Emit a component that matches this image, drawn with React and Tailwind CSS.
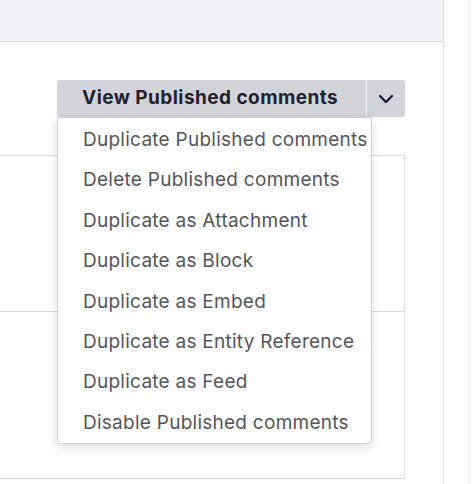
import { ChevronDown } from 'lucide-react';

const ITEMS = [
  'Duplicate Published comments',
  'Delete Published comments',
  'Duplicate as Attachment',
  'Duplicate as Block',
  'Duplicate as Embed',
  'Duplicate as Entity Reference',
  'Duplicate as Feed',
  'Disable Published comments',
];

export default function App() {
  return (
    <div
      className="relative w-[474px] h-[484px] overflow-hidden bg-white flex"
      style={{ fontFamily: 'Inter, "Noto Sans", sans-serif' }}
    >
      {/* main column */}
      <div className="w-[444px] h-full border-r border-[#dcdce0] flex flex-col">
        <div className="h-[42px] bg-[#f3f3f8] border-b border-[#dcdce0]" />

        {/* action bar */}
        <div className="pt-[38px] pl-[57px] h-[113px]">
          <div className="flex h-[37px] w-[348px] rounded-[3px] overflow-hidden">
            <div className="w-[309px] bg-[#d3d4d9] flex items-center pl-[25px] text-[19px] font-bold text-[#222330] tracking-[0.45px]">
              View Published comments
            </div>
            <div className="w-px bg-[#f4f4f6]" />
            <div className="flex-1 bg-[#d3d4d9] flex items-center justify-center">
              <ChevronDown size={24} strokeWidth={2.2} className="text-[#14183a]" />
            </div>
          </div>
        </div>

        {/* panel behind the menu */}
        <div className="w-[405px] border-r border-t border-b border-[#dcdce0] flex flex-col">
          <div className="h-[156px] border-b border-[#dcdce0]" />
          <div className="h-[166px]" />
        </div>
      </div>

      {/* right strip */}
      <div className="flex-1 h-full flex justify-end pr-[4px]">
        <div className="w-px h-full bg-[#ececef]" />
      </div>

      {/* dropdown menu */}
      <div className="absolute left-[57px] top-[117px] w-[315px] bg-white border border-[#d0d0d4] rounded-b-[3px] shadow-[0_4px_12px_rgba(0,0,0,0.12)] pt-[2px]">
        {ITEMS.map((label) => (
          <div
            key={label}
            className="h-[40.4px] flex items-center pl-[25px] text-[19px] text-[#55565b] whitespace-nowrap tracking-[0.26px]"
          >
            {label}
          </div>
        ))}
      </div>
    </div>
  );
}
